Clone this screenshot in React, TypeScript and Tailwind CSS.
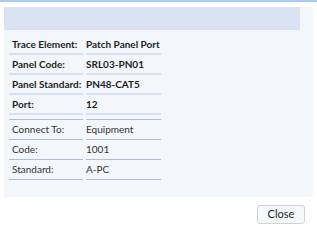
import React from 'react'

type Row = { label: string; value: string }

const traceRows: Row[] = [
  { label: 'Trace Element:', value: 'Patch Panel Port' },
  { label: 'Panel Code:', value: 'SRL03-PN01' },
  { label: 'Panel Standard:', value: 'PN48-CAT5' },
  { label: 'Port:', value: '12' },
]

const connectRows: Row[] = [
  { label: 'Connect To:', value: 'Equipment' },
  { label: 'Code:', value: '1001' },
  { label: 'Standard:', value: 'A-PC' },
]

export default function App() {
  return (
    <div
      className="w-[317px] h-[230px] bg-white border-t-2 border-[#a9caf3] flex flex-col text-[10px] text-[#1e1e1e]"
      style={{ fontFamily: 'Lato, "Open Sans", sans-serif' }}
    >
      <div className="mt-[5px] ml-[4px] w-[309px] h-[190px] bg-[#f3f6fa] flex flex-col">
        <div className="w-[296px] h-[23px] bg-[#dae3f1]" />

        <div className="ml-[5px] mt-[5px] flex flex-col">
          {traceRows.map((r) => (
            <div key={r.label} className="flex gap-[3px] h-[20px] font-bold">
              <div className="w-[74px] pl-[3px] flex items-center border-b-2 border-[#d6e0ee]">{r.label}</div>
              <div className="w-[75px] flex items-center border-b-2 border-[#d6e0ee]">{r.value}</div>
            </div>
          ))}
        </div>

        <div className="ml-[5px] mt-[4px] flex flex-col text-[#333]">
          <div className="flex gap-[3px]">
            <div className="w-[74px] border-t border-[#aebdd4]" />
            <div className="w-[75px] border-t border-[#aebdd4]" />
          </div>
          {connectRows.map((r) => (
            <div key={r.label} className="flex gap-[3px] h-[20px]">
              <div className="w-[74px] pl-[3px] flex items-center border-b border-[#aebdd4]">{r.label}</div>
              <div className="w-[75px] flex items-center border-b border-[#aebdd4]">{r.value}</div>
            </div>
          ))}
        </div>
      </div>

      <div className="flex justify-end pr-[12px] pt-[8px]">
        <button className="w-[48px] h-[19px] rounded-[3px] border border-[#cfd4da] bg-[#f6f8fa] text-[11px] text-[#222] flex items-center justify-center">
          Close
        </button>
      </div>
    </div>
  )
}
